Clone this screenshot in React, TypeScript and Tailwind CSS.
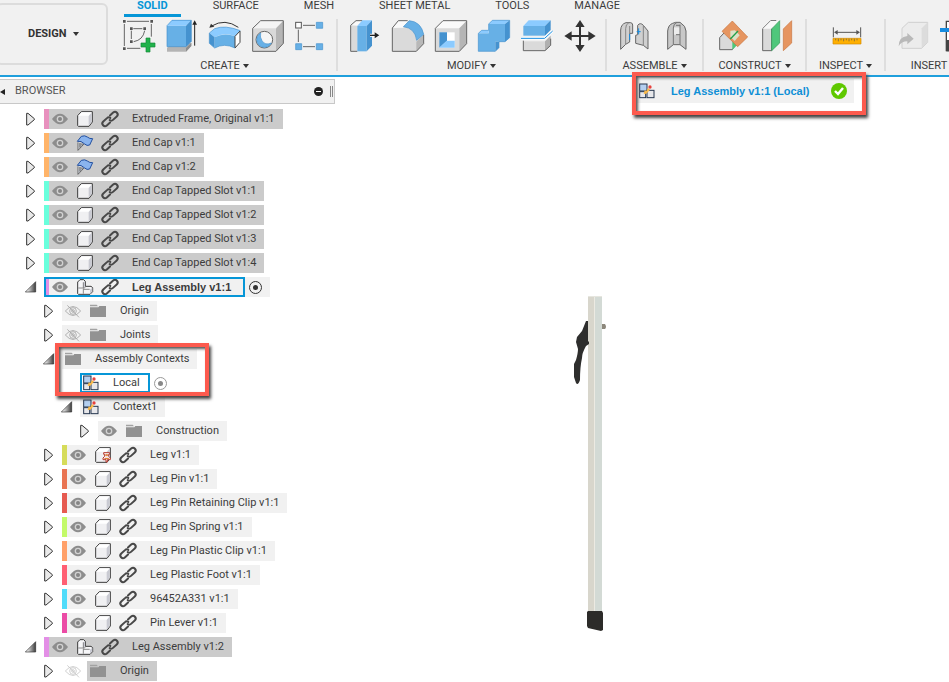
import { useState, type ReactNode } from "react";

type Kind = "body" | "surface" | "assembly" | "pinned" | "folder" | "context";
type Node = {
  name: string; level: 1 | 2 | 3 | 4; kind: Kind;
  open?: boolean; leaf?: boolean; bar?: string; eye?: "on" | "off"; eyeOutside?: boolean;
  link?: boolean; dark?: boolean; active?: boolean; bold?: boolean; radio?: "dark" | "light";
};

const PAD = { 1: "pl-[25px]", 2: "pl-[43px]", 3: "pl-[61px]", 4: "pl-[79px]" };

const part = (name: string, level: 1 | 2, bar: string, kind: Kind = "body"): Node =>
  ({ name, level, kind, bar, eye: "on", link: true, dark: level === 1 });

const NODES: Node[] = [
  part("Extruded Frame, Original v1:1", 1, "bg-[#e891be]"),
  part("End Cap v1:1", 1, "bg-[#ffb469]", "surface"),
  part("End Cap v1:2", 1, "bg-[#ffb469]", "surface"),
  part("End Cap Tapped Slot v1:1", 1, "bg-[#69ffdc]"),
  part("End Cap Tapped Slot v1:2", 1, "bg-[#69ffdc]"),
  part("End Cap Tapped Slot v1:3", 1, "bg-[#69ffdc]"),
  part("End Cap Tapped Slot v1:4", 1, "bg-[#69ffdc]"),
  { ...part("Leg Assembly v1:1", 1, "bg-[#e38fe6]", "assembly"), dark: false, open: true, active: true, bold: true, radio: "dark" },
  { name: "Origin", level: 2, kind: "folder", eye: "off" },
  { name: "Joints", level: 2, kind: "folder", eye: "off" },
  { name: "Assembly Contexts", level: 2, kind: "folder", open: true },
  { name: "Local", level: 3, kind: "context", leaf: true, active: true, radio: "light" },
  { name: "Context1", level: 3, kind: "context", open: true },
  { name: "Construction", level: 4, kind: "folder", eye: "on" },
  part("Leg v1:1", 2, "bg-[#d6dc5a]", "pinned"),
  part("Leg Pin v1:1", 2, "bg-[#e97452]"),
  part("Leg Pin Retaining Clip v1:1", 2, "bg-[#e65a50]"),
  part("Leg Pin Spring v1:1", 2, "bg-[#c3fa69]"),
  part("Leg Pin Plastic Clip v1:1", 2, "bg-[#ffa069]"),
  part("Leg Plastic Foot v1:1", 2, "bg-[#ff5f73]"),
  part("96452A331 v1:1", 2, "bg-[#50dcfa]"),
  part("Pin Lever v1:1", 2, "bg-[#eb4ba5]"),
  { ...part("Leg Assembly v1:2", 1, "bg-[#e38fe6]", "assembly"), open: true },
  { name: "Origin", level: 2, kind: "folder", eye: "off", eyeOutside: true, dark: true },
];

const Small = ({ children }: { children: ReactNode }) => (
  <svg viewBox="0 0 48 48" className="size-4 shrink-0 overflow-visible" aria-hidden="true">{children}</svg>
);

const Cube = () => (
  <>
    <path d="M2 44V14L13 2H46V33L36 46H4Z" fill="#f0f0f2" stroke="#3c3c3c" strokeWidth="3" strokeLinejoin="round" />
    <path d="M4 14 14 4H44L35 14Z" fill="#fff" />
    <path d="M35 15 44 5V32L35 44Z" fill="#c9cad2" />
  </>
);

const Chain = () => (
  <Small>
    <g transform="rotate(-42 24 24)" fill="none" stroke="#484848" strokeWidth="6" strokeLinecap="round">
      <path d="M17 32H4A8 8 0 0 1 4 16H19A8 8 0 0 1 27 22" />
      <path d="M31 16H44A8 8 0 0 1 44 32H29A8 8 0 0 1 21 26" />
    </g>
  </Small>
);

function NodeIcon({ kind }: { kind: Kind }) {
  if (kind === "body") return <Small><Cube /></Small>;
  if (kind === "pinned") return (
    <Small>
      <Cube />
      <path d="M26 17H44V22H41V28L46 33V38H37V45H33V38H24V33L29 28V22H26Z" fill="#fff" stroke="#b5382c" strokeWidth="3" />
      <path d="M32 22H38V27H32ZM29 33H41V36H29Z" fill="#f2a93b" stroke="#b5382c" />
    </Small>
  );
  if (kind === "surface") return (
    <Small>
      <path d="M3 22V46L22 26" fill="#dfe3ea" stroke="#333" strokeWidth="2" />
      <path d="M9 24V38M15 25V32" stroke="#444" strokeWidth="3" />
      <path d="M1 19 13 4Q24 0 31 6Q38 12 47 11L38 30Q30 34 23 27Q12 16 1 19Z" fill="#8ab4ee" stroke="#2350a0" strokeWidth="3" strokeLinejoin="round" />
    </Small>
  );
  if (kind === "assembly") return (
    <Small>
      <path d="M2 44V9L9 2H20L25 7V22H42L47 26V38L39 46H4Z" fill="#f6f6f8" stroke="#3c3c3c" strokeWidth="3" strokeLinejoin="round" />
      <path d="M19 10 24 6V22L19 28ZM39 32 46 26V37L39 44Z" fill="#c9cad2" />
      <path d="M19 44V30L26 23M4 27H19V10M20 31H38" fill="none" stroke="#555" strokeWidth="2" />
    </Small>
  );
  if (kind === "folder") return (
    <Small>
      <path d="M0 5H20L24 10H0Z" fill="#a2a2a2" />
      <path d="M0 13H25L28 9H48V42H0Z" fill="#929292" />
    </Small>
  );
  return (
    <Small>
      <rect x="2" y="3" width="22" height="21" fill="#b4cff0" stroke="#26364f" strokeWidth="3" />
      <rect x="2" y="26" width="18" height="18" fill="#e7e7ea" stroke="#26364f" strokeWidth="3" />
      <rect x="24" y="22" width="21" height="22" fill="#e7e7ea" stroke="#26364f" strokeWidth="3" />
      <path d="M14 33 17 22 22 24 27 15 33 20 27 27 22 32Z" fill="#f9b94a" />
      <circle cx="33" cy="12" r="5" fill="#e8413c" />
    </Small>
  );
}

function Eye({ off }: { off?: boolean }) {
  return (
    <Small>
      {off ? (
        <g fill="none" stroke="#a3a3a3" strokeWidth="2.5">
          <path d="M1 24Q24 -3 47 24Q24 51 1 24Z" />
          <circle cx="24" cy="24" r="10" />
          <circle cx="24" cy="24" r="4" />
          <path d="M7 7 42 43" />
        </g>
      ) : (
        <>
          <path d="M0 24Q12 8 24 8T48 24Q36 40 24 40T0 24Z" fill="#8d8d8d" />
          <circle cx="24" cy="24" r="10" fill="#d2d2d2" />
          <circle cx="24" cy="24" r="6" fill="#858585" />
        </>
      )}
    </Small>
  );
}

function Twisty({ open }: { open?: boolean }) {
  return (
    <svg viewBox="0 0 36 36" className="size-3 overflow-visible" aria-hidden="true">
      <defs>
        <linearGradient id="tw"><stop offset="0.2" stopColor="#e8e8e8" /><stop offset="1" stopColor="#3c3c3c" /></linearGradient>
      </defs>
      {open
        ? <path d="M1 33 32 2V33Z" fill="url(#tw)" stroke="#333" strokeWidth="2" />
        : <path d="M5 1H9L28 17V20L9 36H5Z" fill="#e9e9e9" stroke="#333" strokeWidth="3" strokeLinejoin="round" />}
    </svg>
  );
}

function Row({ node }: { node: Node }) {
  const [open, setOpen] = useState(!!node.open);
  const [shown, setShown] = useState(node.eye === "on");
  const bg = node.dark ? "bg-[#cbcbcb]" : node.kind === "context" && node.active ? "bg-white" : "bg-[#f1f1f1]";
  const end = node.bold ? "pr-3.5" : node.active ? "pr-2.5" : "pr-2";
  const eye = node.eye && (
    <button type="button" aria-label={"Visibility of " + node.name} onClick={() => setShown(!shown)}
      className={node.eyeOutside ? "ml-[3px] mr-[6px] opacity-60" : "mr-[9px]"}>
      <Eye off={!shown} />
    </button>
  );
  return (
    <li className={"flex h-5 items-center " + PAD[node.level]}>
      <div className="mr-[7px] w-3 shrink-0">
        {!node.leaf && (
          <button type="button" className="block" aria-label={"Expand " + node.name} onClick={() => setOpen(!open)}><Twisty open={open} /></button>
        )}
      </div>
      {node.eyeOutside && eye}
      <div className={"flex h-5 items-center " + (node.radio === "dark" ? "bg-[#f1f1f1] pr-2" : "")}>
        <div className={"flex h-5 items-center " + end + " " + bg + (node.active ? " outline-2 -outline-offset-2 outline-[#0696d7]" : "")}>
          {node.bar && <span className={"h-5 w-[5px] " + node.bar} />}
          <span className="w-[3px]" />
          {!node.eyeOutside && eye}
          <NodeIcon kind={node.kind} />
          {node.link && <span className="ml-[9px]"><Chain /></span>}
          <span className={"ml-[14px] whitespace-nowrap " + (node.bold ? "font-['Liberation_Sans',sans-serif] font-bold" : "pt-px")}>{node.name}</span>
        </div>
        {node.radio && (
          <input type="radio" name={"active-" + node.kind} defaultChecked aria-label={"Activate " + node.name}
            className={"ml-1 size-[13px] appearance-none rounded-full border bg-clip-content p-[3px] " +
              (node.radio === "dark" ? "border-[#333] bg-[#333]" : "border-[#999] bg-[#888]")} />
        )}
      </div>
    </li>
  );
}

const BLUE = "#67b0e6", SKY = "#8ccbff", DEEP = "#4592cf", EDGE = "#666";

const SKETCH = (
  <>
    <path d="M12 4H78M4 12V78M85 12V50M12 85H52" stroke={EDGE} strokeWidth="3" fill="none" />
    <path d="M31 26H58M25 32V57M65 32Q60 60 32 65" stroke={EDGE} strokeWidth="3" fill="none" />
    <path d="M0 0H8V8H0ZM82 0H90V8H82ZM0 82H8V90H0ZM21 22H29V30H21ZM61 22H69V30H61ZM21 61H29V69H21Z" fill="#555" />
    <path d="M69 54H81V69H96V81H81V96H69V81H54V69H69Z" fill="#21b24b" stroke="#138a36" strokeWidth="2" />
  </>
);
const EXTRUDE = (
  <>
    <path d="M3 84 18 68H76V78L60 95H3Z" fill="#b4b4b4" /><path d="M60 84 76 68V78L60 95Z" fill="#8d8d8d" />
    <path d="M3 17H60V80H3Z" fill={BLUE} /><path d="M3 17 18 0H76L60 17Z" fill={SKY} />
    <path d="M60 17 76 0V64L60 80Z" fill={DEEP} />
    <path d="M3 80V17L18 1H76V64L60 80Z" fill="none" stroke={DEEP} strokeWidth="2" />
    <path d="M86 77V12" stroke="#222" strokeWidth="3" /><path d="M79 14 86 1 93 14Z" fill="#222" />
  </>
);
const REVOLVE = (
  <>
    <path d="M88 22Q48 -6 8 18" stroke="#333" strokeWidth="3" fill="none" /><path d="M1 23 6 11 16 20Z" fill="#333" />
    <path d="M1 39 17 26Q48 14 94 32L78 49Q46 35 17 52Z" fill={SKY} />
    <path d="M1 39 17 52V84L1 70Z" fill={DEEP} />
    <path d="M17 52Q46 36 78 49V84Q46 68 17 84Z" fill={BLUE} />
    <path d="M78 49 93 33V67L78 84Z" fill="#fff" stroke="#444" strokeWidth="3" />
    <path d="M1 39 17 26Q48 14 94 32M1 39V70L17 84Q46 68 78 84" stroke={DEEP} strokeWidth="2" fill="none" />
  </>
);
const HOLE = (
  <>
    <path d="M2 25 26 2H94L72 25Z" fill="#f4f4f4" /><path d="M2 25H72V94H2Z" fill="#d9d9d9" />
    <path d="M72 25 94 2V70L72 94Z" fill="#b5b5b5" />
    <path d="M2 94V25L26 2H94V70L72 94Z" fill="none" stroke={EDGE} strokeWidth="3" />
    <circle cx="37" cy="59" r="25" fill="#f5f5f5" stroke={EDGE} strokeWidth="3" />
    <path d="M26 39A23 23 0 1 0 58 69Q39 77 30 62Q23 52 26 39Z" fill={BLUE} stroke={DEEP} strokeWidth="2" />
  </>
);
const PATTERN = (
  <>
    <path d="M24 16H60M10 29V66M24 80H60" stroke={EDGE} strokeWidth="3" />
    <rect x="2" y="7" width="17" height="17" fill="#fff" stroke="#555" strokeWidth="3" />
    <path d="M64 7H83V25H64ZM64 71H83V89H64ZM2 71H20V89H2Z" fill={BLUE} stroke={DEEP} strokeWidth="2" />
  </>
);
const PRESSPULL = (
  <>
    <path d="M8 94V16L24 2H43L28 18V94Z" fill="#dadada" /><path d="M8 16 24 2H43L28 17Z" fill="#fafafa" />
    <path d="M28 94H8V16L24 2H43" stroke={EDGE} strokeWidth="3" fill="none" />
    <path d="M28 18H56V94H28Z" fill={BLUE} /><path d="M28 18 43 1H72L56 18Z" fill={SKY} /><path d="M56 18 72 1V77L56 94Z" fill={DEEP} />
    <path d="M66 46H93" stroke="#fff" strokeWidth="9" />
    <path d="M66 46H84" stroke="#222" strokeWidth="4" /><path d="M80 37 94 46 80 55Z" fill="#222" />
  </>
);
const FILLET = (
  <>
    <path d="M4 94V24L22 2H50Q90 5 98 42V70L76 94Z" fill="#dadada" />
    <path d="M4 24 22 2H52L37 23Z" fill="#fafafa" />
    <path d="M76 65 98 44V71L76 94Z" fill="#b8b8b8" />
    <path d="M4 94V24L22 2H50M98 44V71L76 94H4" stroke={EDGE} strokeWidth="3" fill="none" />
    <path d="M37 20Q72 24 77 61L98 43Q90 5 55 2Z" fill={BLUE} stroke={DEEP} strokeWidth="2" />
  </>
);
const SHELL = (
  <>
    <path d="M4 25 27 2H98L76 25Z" fill="#fafafa" /><path d="M4 25H76V94H4Z" fill="#dadada" /><path d="M76 25 98 2V71L76 94Z" fill="#b5b5b5" />
    <path d="M4 94V25L27 2H98V71L76 94Z" fill="none" stroke={EDGE} strokeWidth="3" />
    <path d="M16 37H62V83H16Z" fill="#fff" /><path d="M16 37H39V62L16 83Z" fill={DEEP} /><path d="M16 83 38 62H62V83Z" fill={SKY} />
  </>
);
const COMBINE = (
  <>
    <path d="M4 40H35V12H84V65H55V94H4Z" fill={BLUE} />
    <path d="M4 40 14 31H35V40ZM35 12 46 1H98L84 12Z" fill={SKY} />
    <path d="M84 12 98 1V53L84 65ZM55 65H66V83L55 94Z" fill={DEEP} />
    <path d="M4 94V40L14 31H35V12L46 1H98V53L84 65H66V83L55 94Z" fill="none" stroke={DEEP} strokeWidth="2" />
  </>
);
const SPLIT = (
  <>
    <path d="M10 64H75V92H10Z" fill="#dadada" /><path d="M75 64 92 47V76L75 92Z" fill="#b0b0b0" />
    <path d="M10 62V92H75L92 76V56" stroke={EDGE} strokeWidth="3" fill="none" />
    <path d="M10 18H75V47H10Z" fill={BLUE} /><path d="M10 18 26 1H92L75 18Z" fill={SKY} /><path d="M75 18 92 1V30L75 47Z" fill={DEEP} />
    <path d="M3 55H74L98 33" stroke="#fff" strokeWidth="8" fill="none" />
    <path d="M3 55H74L98 33" stroke="#168ce0" strokeWidth="3" fill="none" />
  </>
);
const MOVE = (
  <>
    <path d="M51 12V84M16 48H86" stroke="#333" strokeWidth="6" />
    <path d="M37 21 51 0 65 21ZM37 75 51 96 65 75ZM26 34 4 48 26 62ZM76 34 98 48 76 62Z" fill="#333" />
  </>
);
const JOINT = (
  <>
    <path d="M11 88V30Q12 12 27 8H41Q47 9 47 15V40H38V66L26 73Z" fill="#d0d0d0" stroke={EDGE} strokeWidth="3" />
    <path d="M26 72V26Q26 12 35 9M38 40V18" stroke="#858585" strokeWidth="3" fill="none" />
    <path d="M56 46 62 44V16Q70 6 79 16L93 33V87L79 76 56 70Z" fill="#d0d0d0" stroke={EDGE} strokeWidth="3" />
    <path d="M79 18V75" stroke="#858585" strokeWidth="3" />
    <path d="M38 42V60M65 25V43M59 35H71" stroke="#168ce0" strokeWidth="3" />
  </>
);
const BUILT = (
  <>
    <path d="M23 88V33Q25 14 38 10L47 7H60Q78 18 78 33V88L60 74H40Z" fill="#c8c8c8" stroke={EDGE} strokeWidth="3" />
    <path d="M41 22H60V44H41Z" fill="#ececec" />
    <path d="M40 74V24Q40 12 50 8M60 74V44H48M60 44V14M48 16H60" fill="none" stroke="#757575" strokeWidth="3" />
  </>
);
const PLANE = (
  <>
    <path d="M8 89V53L22 38H60L66 60 46 89Z" fill="#dadada" stroke={EDGE} strokeWidth="3" />
    <path d="M46 89V57L64 40V72Z" fill="#4fc77b" />
    <path d="M15 34 46 3 92 51 62 80Z" fill="#e69560" stroke="#c8763f" strokeWidth="2" />
    <path d="M40 32 54 31 68 46 53 63 40 50Z" fill="#d8efd9" opacity=".85" />
    <path d="M40 57 63 33" stroke="#21a04b" strokeWidth="4" />
  </>
);
const OFFSET = (
  <>
    <path d="M8 92V26L32 2H48L35 25V92Z" fill="#dadada" stroke={EDGE} strokeWidth="3" />
    <path d="M9 26 32 3H56L35 26Z" fill="#f8f8f8" />
    <path d="M35 92V27L59 2V69Z" fill="#4fc77b" stroke="#309b58" strokeWidth="2" />
    <path d="M70 92V27L95 2V69Z" fill="#e69560" stroke="#c8763f" strokeWidth="2" />
  </>
);
const MEASURE = (
  <>
    <path d="M10 22V52M92 22V52M18 37H84" stroke="#555" strokeWidth="3" />
    <path d="M12 37 23 30V44ZM90 37 79 30V44Z" fill="#555" />
    <path d="M9 55H93V72H9Z" fill="#ffb000" stroke="#d18a00" strokeWidth="2" />
    <path d="M17 56V61M25 56V64M33 56V61M41 56V64M49 56V61M57 56V64M65 56V61M73 56V64M81 56V61" stroke="#555" strokeWidth="2" />
  </>
);
const DERIVE = (
  <>
    <path d="M18 85V25L37 7H95V67L77 85Z" fill="#ececec" stroke="#cfcfcf" strokeWidth="3" />
    <path d="M77 85V25L95 7V67Z" fill="#dcdcdc" />
    <path d="M8 79Q8 50 34 48V39L53 56 34 73V64Q16 64 8 79Z" fill="#b9b9b9" />
  </>
);
const INSERT = (
  <>
    <path d="M22 4H60V92H22Z" fill="#fff" stroke="#444" strokeWidth="4" />
    <path d="M22 60H60V94H22Z" fill="#444" />
    <path d="M3 24H30V12L48 30 30 48V36H3Z" fill="#168ce0" />
  </>
);

const GROUPS: { label: string; width: string; icons: [string, ReactNode][] }[] = [
  { label: "CREATE", width: "w-[225px]", icons: [["Sketch", SKETCH], ["Extrude", EXTRUDE], ["Revolve", REVOLVE], ["Hole", HOLE], ["Pattern", PATTERN]] },
  { label: "MODIFY", width: "w-[269px]", icons: [["Press Pull", PRESSPULL], ["Fillet", FILLET], ["Shell", SHELL], ["Combine", COMBINE], ["Split", SPLIT], ["Move", MOVE]] },
  { label: "ASSEMBLE", width: "w-[97px]", icons: [["Joint", JOINT], ["As-built Joint", BUILT]] },
  { label: "CONSTRUCT", width: "w-[103px]", icons: [["Plane at Angle", PLANE], ["Offset Plane", OFFSET]] },
  { label: "INSPECT", width: "w-[79px]", icons: [["Measure", MEASURE]] },
  { label: "INSERT", width: "w-[97px]", icons: [["Derive", DERIVE], ["Insert", INSERT]] },
];

const Caret = () => <svg viewBox="0 0 6 4" className="h-1 w-1.5" aria-hidden="true"><path d="M0 0H6L3 4Z" fill="#333" /></svg>;

function Toolbar() {
  const [tab, setTab] = useState("SOLID");
  return (
    <header className="flex h-[77px] border-b-2 border-[#1f9fdc] bg-[#f1f1f1]">
      <button type="button" className="-ml-1 mt-[3px] flex h-[62px] w-28 shrink-0 items-center gap-1.5 rounded-md border-2 border-[#dcdcdc] pl-[30px] font-bold text-[#333]">
        DESIGN <Caret />
      </button>
      <div className="ml-[5px] min-w-0 flex-1">
        <nav className="ml-[11px] flex gap-[19px]">
          {["SOLID", "SURFACE", "MESH", "SHEET METAL", "TOOLS", "MANAGE"].map((t) => (
            <button key={t} type="button" onClick={() => setTab(t)}
              className={"h-[17px] shrink-0 whitespace-nowrap border-b-[3px] px-[13px] pb-[3px] leading-[11px] " +
                (t === tab ? "border-[#0696d7] font-bold text-[#0696d7]" : "border-transparent")}>
              {t}
            </button>
          ))}
        </nav>
        <div className="mt-[2px] flex">
          {GROUPS.map((g) => (
            <div key={g.label} className={"flex h-[52px] shrink-0 flex-col items-center border-r-2 border-[#dedede] pt-px " + g.width}>
              <div className="flex gap-[11px]">
                {g.icons.map(([name, art]) => (
                  <button key={name} type="button" aria-label={name}>
                    <svg viewBox="0 0 96 96" className="size-8 overflow-visible" aria-hidden="true">{art}</svg>
                  </button>
                ))}
              </div>
              <button type="button" className="mt-[7px] flex items-center gap-[3px] leading-[14px]">{g.label} <Caret /></button>
            </div>
          ))}
        </div>
      </div>
    </header>
  );
}

const FRAME = "pointer-events-none absolute z-10 border-4 border-[#fc5a4e] shadow-[2px_3px_3px_#444,inset_2px_2px_3px_#555]";

function Leg() {
  return (
    <svg viewBox="0 0 40 345" className="absolute left-[235px] top-[213px] h-[345px] w-10" role="img" aria-label="Leg">
      <path d="M18 6H32V324H18Z" fill="#d8d6cc" />
      <path d="M24 6H25V324H24Z" fill="#eceae2" />
      <path d="M25 6H32V324H25Z" fill="#d3dad5" />
      <path d="M18 6H32V7H18Z" fill="#e6e6df" />
      <path d="M32 34H35Q37 37 35 39H32Z" fill="#8d887c" />
      <path d="M16 31H18V51L19 52V54L16 56Q12 63 12 68Q10 77 10 90Q8 96 6 93L4 87V74L6 70Q8 63 8 59L6 52L7 47L12 41Z" fill="#2e2e2d" />
      <path d="M18 321H32L33 323V340L31 341L18 338L17 336V322Z" fill="#2c2b29" />
    </svg>
  );
}

export default function App() {
  return (
    <div className="min-h-screen overflow-hidden bg-white font-[Roboto,sans-serif] text-[11px] text-[#3c3c3c]">
      <Toolbar />
      <main className="flex">
        <aside className="w-[335px] shrink-0 pt-[2px]">
          <div className="flex h-[25px] items-center border border-l-0 border-[#c8c8c8] bg-[#f1f1f1] text-[#555]">
            <svg viewBox="0 0 5 6" className="h-1.5 w-[5px]" aria-hidden="true"><path d="M5 0V6L0 3Z" fill="#222" /></svg>
            <h2 className="ml-[10px] flex-1">BROWSER</h2>
            <button type="button" aria-label="Collapse browser" className="mr-[7px]">
              <svg viewBox="0 0 9 9" className="size-[9px]" aria-hidden="true"><circle cx="4.5" cy="4.5" r="4.5" fill="#222" /><path d="M2 4.5H7" stroke="#fff" /></svg>
            </button>
            <span className="mr-px h-[11px] w-[3px] border-x border-[#888]" />
          </div>
          <div className="relative pt-[5px]">
            <ul className="flex flex-col gap-1">
              {NODES.map((n, i) => <Row key={i} node={n} />)}
            </ul>
            <div className={FRAME + " left-[55px] top-[239px] h-[53px] w-[154px]"} />
          </div>
        </aside>
        <section className="relative flex-1">
          <div className="relative ml-auto mr-[95px] mt-[2px] flex h-6 w-[217px] items-center bg-[#f1f1f1] pl-[2px] pr-[7px]">
            <NodeIcon kind="context" />
            <span className="ml-4 flex-1 whitespace-nowrap font-['Liberation_Sans',sans-serif] font-bold text-[#0e8fd6]">Leg Assembly v1:1 (Local)</span>
            <button type="button" aria-label="Finish editing">
              <svg viewBox="0 0 16 16" className="size-4" aria-hidden="true">
                <circle cx="8" cy="8" r="8" fill="#5fc800" /><path d="M4 8 7 11 12 5" fill="none" stroke="#fff" strokeWidth="2.4" />
              </svg>
            </button>
            <div className={FRAME + " -bottom-3 -left-[5px] -right-3 -top-[7px]"} />
          </div>
          <Leg />
        </section>
      </main>
    </div>
  );
}
